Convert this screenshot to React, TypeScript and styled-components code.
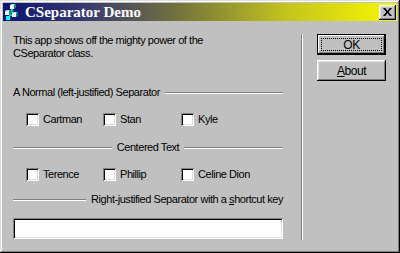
import React from "react";
import styled, { createGlobalStyle } from "styled-components";

const GlobalStyle = createGlobalStyle`
  html, body { margin: 0; padding: 0; background: #c0c0c0; }
  body { font-family: "Liberation Sans", Arial, sans-serif; font-size: 11px; letter-spacing: -0.45px; color: #000; }
`;

const Window = styled.div`
  width: 400px;
  height: 253px;
  box-sizing: border-box;
  background: #c0c0c0;
  padding: 3px;
  display: flex;
  flex-direction: column;
  box-shadow: inset -1px -1px #000, inset 1px 1px #dfdfdf, inset -2px -2px #808080, inset 2px 2px #fff;
`;

const TitleBar = styled.div`
  height: 18px;
  flex: none;
  display: flex;
  align-items: center;
  padding: 0 1px 0 1px;
  background: linear-gradient(to right, #0c1470 0%, #3a3c6c 22%, #74743c 45%, #c4c41e 72%, #f8f800 100%);
`;

const TitleText = styled.span`
  margin-left: 5px;
  font-family: "Liberation Serif", "Times New Roman", serif;
  font-weight: bold;
  font-size: 15px;
  letter-spacing: 0;
  color: #fff;
  flex: 1;
  white-space: nowrap;
`;

const CloseButton = styled.div`
  width: 17px;
  height: 15px;
  box-sizing: border-box;
  background: #c0c0c0;
  display: flex;
  align-items: center;
  justify-content: center;
  box-shadow: inset -1px -1px #000, inset 1px 1px #fff, inset -2px -2px #808080, inset 2px 2px #dfdfdf;
`;

const Client = styled.div`
  flex: 1;
  display: flex;
  margin-top: 1px;
`;

const LeftColumn = styled.div`
  width: 270px;
  margin-left: 10px;
  padding-top: 12px;
  display: flex;
  flex-direction: column;
`;

const Intro = styled.p`
  margin: 0;
  line-height: 13px;
  width: 200px;
`;

const SepRow = styled.div<{ $top: number }>`
  margin-top: ${(p) => p.$top}px;
  height: 13px;
  display: flex;
  align-items: center;
  gap: 5px;
  line-height: 13px;
  white-space: nowrap;
`;

const EtchedLine = styled.div`
  height: 0;
  flex: 1;
  border-top: 1px solid #808080;
  border-bottom: 1px solid #fff;
`;

const CheckRow = styled.div<{ $top: number }>`
  margin-top: ${(p) => p.$top}px;
  margin-left: 13px;
  height: 13px;
  display: grid;
  grid-template-columns: 77px 78px auto;
  align-items: center;
`;

const CheckItem = styled.label`
  display: flex;
  align-items: center;
  gap: 4px;
  line-height: 13px;
`;

const CheckBox = styled.span`
  width: 13px;
  height: 13px;
  box-sizing: border-box;
  background: #fff;
  flex: none;
  box-shadow: inset 1px 1px #808080, inset -1px -1px #fff, inset 2px 2px #000, inset -2px -2px #dfdfdf;
`;

const EditBox = styled.div`
  margin-top: 12px;
  height: 21px;
  box-sizing: border-box;
  background: #fff;
  box-shadow: inset 1px 1px #808080, inset -1px -1px #fff, inset 2px 2px #000, inset -2px -2px #dfdfdf;
`;

const VSep = styled.div`
  margin-left: 18px;
  margin-top: 12px;
  width: 0;
  height: 206px;
  border-left: 1px solid #808080;
  border-right: 1px solid #fff;
`;

const RightColumn = styled.div`
  margin-left: 14px;
  padding-top: 12px;
  display: flex;
  flex-direction: column;
  gap: 5px;
`;

const Button = styled.div<{ $default?: boolean }>`
  width: 69px;
  height: 21px;
  box-sizing: border-box;
  position: relative;
  display: flex;
  align-items: center;
  justify-content: center;
  background: #c0c0c0;
  font-size: 12px;
  box-shadow: ${(p) =>
    p.$default
      ? "inset 0 0 0 1px #000, inset -2px -2px #000, inset 2px 2px #fff, inset -3px -3px #808080"
      : "inset -1px -1px #000, inset 1px 1px #fff, inset -2px -2px #808080, inset 2px 2px #dfdfdf"};
`;

const FocusRect = styled.span`
  position: absolute;
  left: 4px;
  top: 4px;
  right: 4px;
  bottom: 4px;
  border: 1px dotted #000;
`;

const Accel = styled.span`
  text-decoration: underline;
`;

const AppIcon = () => (
  <svg width="16" height="16" viewBox="0 0 16 16">
    <polygon points="6,1 10,1 10,5 6,5" fill="#fff" />
    <polygon points="6,1 8,0 12,0 10,1" fill="#9fe" />
    <polygon points="10,1 12,0 12,4 10,5" fill="#088" />
    <polygon points="1,7 5,7 5,11 1,11" fill="#fff" />
    <polygon points="1,7 3,6 7,6 5,7" fill="#9fe" />
    <polygon points="5,7 7,6 7,10 5,11" fill="#088" />
    <polygon points="8,9 12,9 12,13 8,13" fill="#fff" />
    <polygon points="8,9 10,8 14,8 12,9" fill="#9fe" />
    <polygon points="12,9 14,8 14,12 12,13" fill="#088" />
    <polygon points="2,12 6,12 6,16 2,16" fill="#0ff" />
    <polygon points="6,12 7,11 7,15 6,16" fill="#066" />
    <rect x="7" y="5" width="2" height="4" fill="#0cc" />
    <rect x="5" y="10" width="3" height="2" fill="#0cc" />
  </svg>
);

const CloseGlyph = () => (
  <svg width="9" height="8" viewBox="0 0 9 8">
    <path d="M0,0h2.2l2.3,2.8l2.3,-2.8h2.2l-3.4,4l3.4,4h-2.2l-2.3,-2.8l-2.3,2.8h-2.2l3.4,-4z" fill="#000" />
  </svg>
);

export default function App() {
  return (
    <>
      <GlobalStyle />
      <Window>
        <TitleBar>
          <AppIcon />
          <TitleText>CSeparator Demo</TitleText>
          <CloseButton>
            <CloseGlyph />
          </CloseButton>
        </TitleBar>
        <Client>
          <LeftColumn>
            <Intro>This app shows off the mighty power of the CSeparator class.</Intro>
            <SepRow $top={26}>
              <span>A Normal (left-justified) Separator</span>
              <EtchedLine />
            </SepRow>
            <CheckRow $top={14}>
              <CheckItem><CheckBox />Cartman</CheckItem>
              <CheckItem><CheckBox />Stan</CheckItem>
              <CheckItem><CheckBox />Kyle</CheckItem>
            </CheckRow>
            <SepRow $top={15}>
              <EtchedLine />
              <span>Centered Text</span>
              <EtchedLine />
            </SepRow>
            <CheckRow $top={14}>
              <CheckItem><CheckBox />Terence</CheckItem>
              <CheckItem><CheckBox />Phillip</CheckItem>
              <CheckItem><CheckBox />Celine Dion</CheckItem>
            </CheckRow>
            <SepRow $top={12}>
              <EtchedLine />
              <span>
                Right-justified Separator with a <Accel>s</Accel>hortcut key
              </span>
            </SepRow>
            <EditBox />
          </LeftColumn>
          <VSep />
          <RightColumn>
            <Button $default>
              OK
              <FocusRect />
            </Button>
            <Button>
              <span><Accel>A</Accel>bout</span>
            </Button>
          </RightColumn>
        </Client>
      </Window>
    </>
  );
}
